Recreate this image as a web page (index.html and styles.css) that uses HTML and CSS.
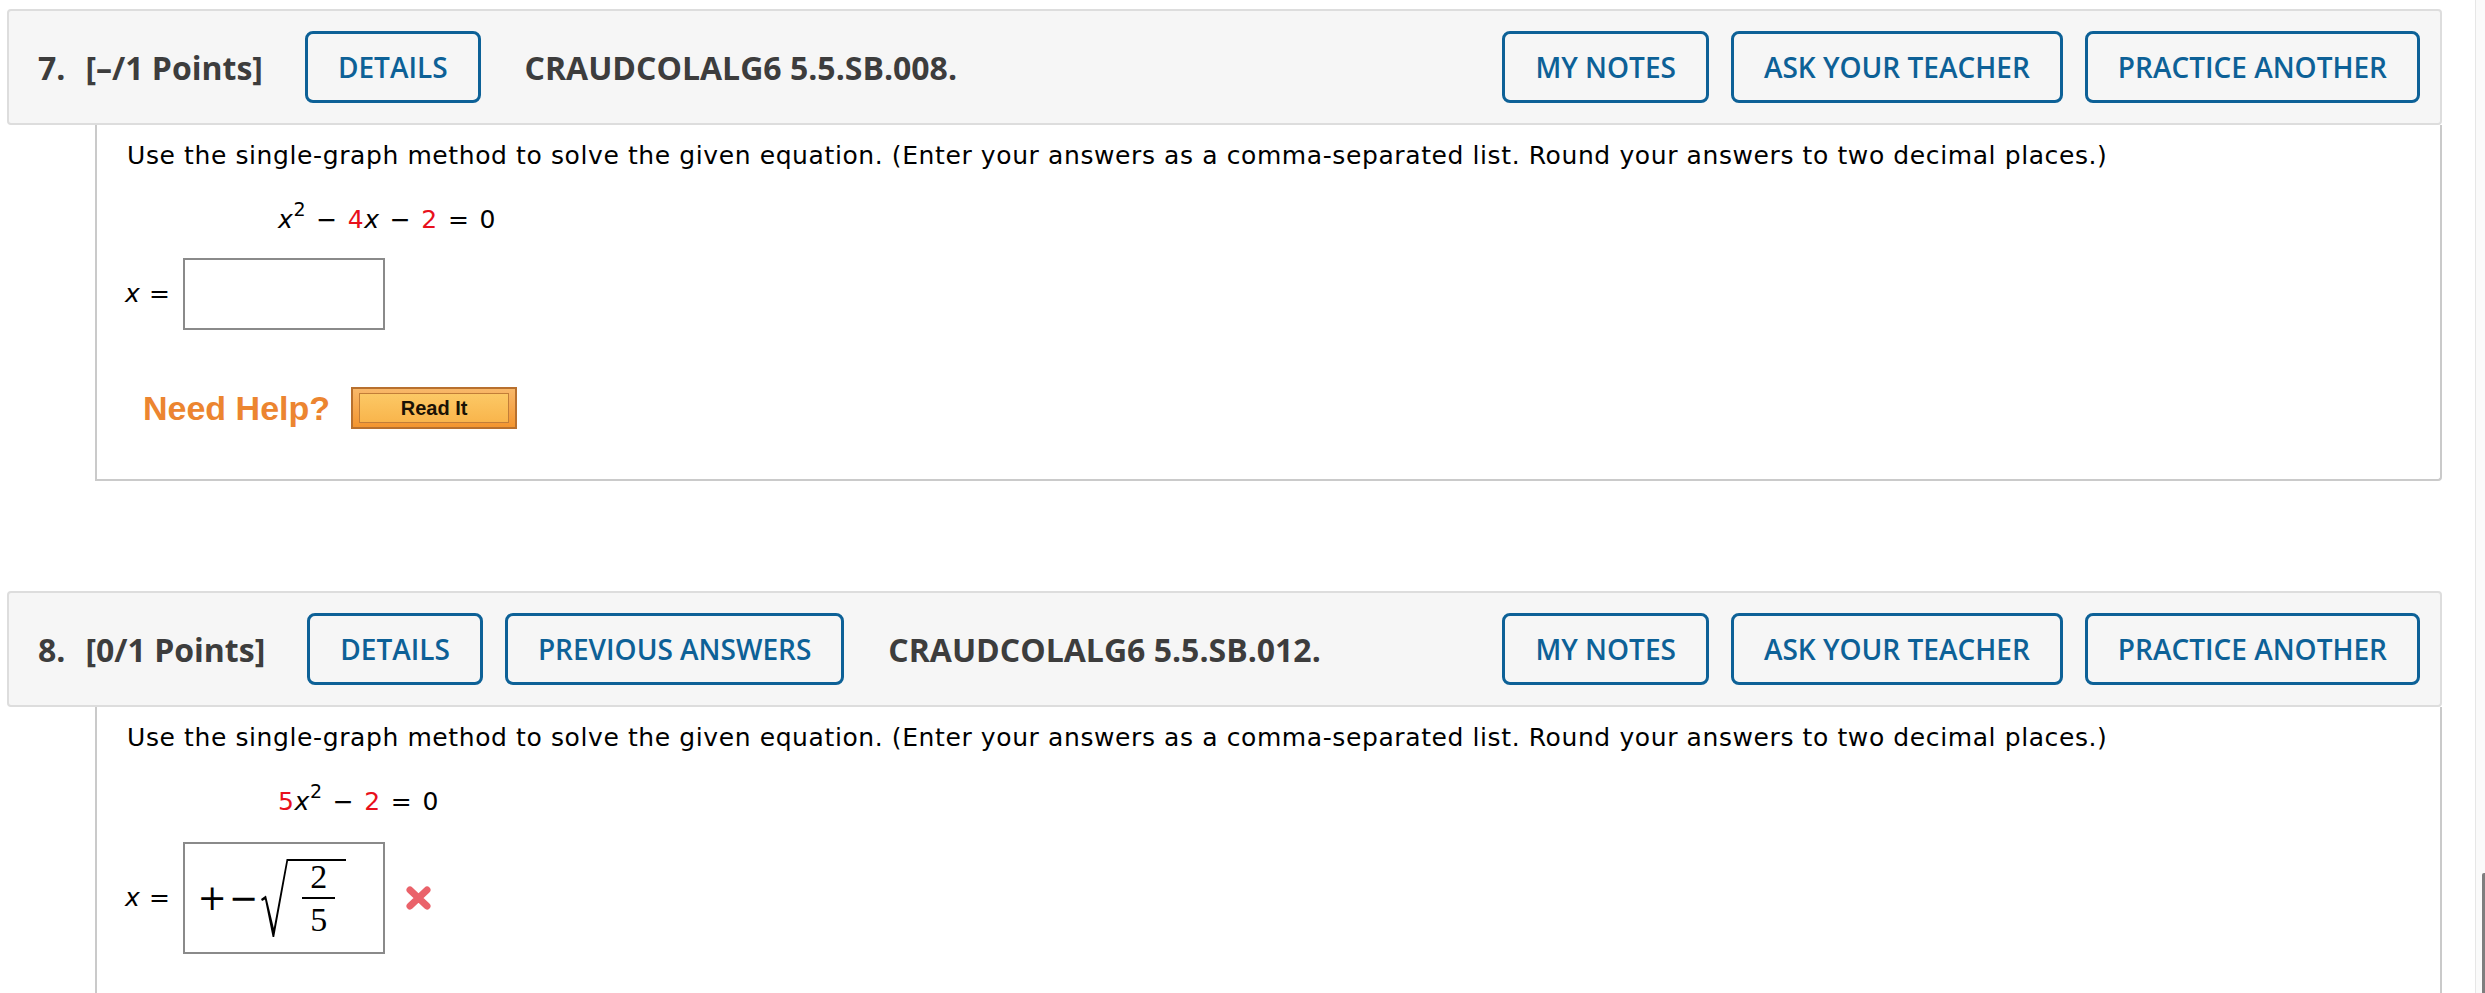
FILE: index.html
```html
<!DOCTYPE html>
<html lang="en">
<head>
<meta charset="utf-8">
<title>Questions</title>
<link rel="stylesheet" href="styles.css">
</head>
<body>
<div class="page">
  <main class="content">
    <section class="question q7">
      <header class="qhead">
        <span class="qnum">7.</span>
        <span class="pts">[–/1 Points]</span>
        <a class="btn">DETAILS</a>
        <span class="qtitle">CRAUDCOLALG6 5.5.SB.008.</span>
        <span class="spacer"></span>
        <a class="btn">MY NOTES</a>
        <a class="btn">ASK YOUR TEACHER</a>
        <a class="btn">PRACTICE ANOTHER</a>
      </header>
      <div class="qbody">
        <p class="prompt">Use the single-graph method to solve the given equation. (Enter your answers as a comma-separated list. Round your answers to two decimal places.)</p>
        <div class="eq"><i>x</i><sup>2</sup> − <span class="red">4</span><i>x</i> − <span class="red">2</span> = 0</div>
        <div class="answer">
          <span class="lbl"><i>x</i> =</span>
          <span class="input"></span>
        </div>
        <div class="help">
          <span class="needhelp">Need Help?</span>
          <span class="readit"><span class="readit-in">Read It</span></span>
        </div>
      </div>
    </section>

    <section class="question q8">
      <header class="qhead">
        <span class="qnum">8.</span>
        <span class="pts">[0/1 Points]</span>
        <a class="btn">DETAILS</a>
        <a class="btn">PREVIOUS ANSWERS</a>
        <span class="qtitle">CRAUDCOLALG6 5.5.SB.012.</span>
        <span class="spacer"></span>
        <a class="btn">MY NOTES</a>
        <a class="btn">ASK YOUR TEACHER</a>
        <a class="btn">PRACTICE ANOTHER</a>
      </header>
      <div class="qbody">
        <p class="prompt">Use the single-graph method to solve the given equation. (Enter your answers as a comma-separated list. Round your answers to two decimal places.)</p>
        <div class="eq"><span class="red">5</span><i>x</i><sup>2</sup> − <span class="red">2</span> = 0</div>
        <div class="answer">
          <span class="lbl"><i>x</i> =</span>
          <span class="input tall">
            <span class="math">
              <span class="op">+</span><span class="op">−</span>
              <span class="root">
                <svg class="radical" width="28" height="78" viewBox="0 0 28 78"><path d="M1 40 L6 36.5 L13.8 69 L26.6 0 L28 0 L28 2 L14.2 78 L12.6 78 L5 40.5 L2 42 Z" fill="#000"/></svg>
                <span class="radicand">
                  <span class="frac">
                    <span class="num">2</span>
                    <span class="bar"></span>
                    <span class="den">5</span>
                  </span>
                </span>
              </span>
            </span>
          </span>
          <svg class="wrong" width="27" height="26" viewBox="0 0 27 26"><path d="M5 5 L22 21 M22 5 L5 21" stroke="#ea626a" stroke-width="7" stroke-linecap="round"/></svg>
        </div>
      </div>
    </section>
  </main>
  <div class="scrollbar"><div class="thumb"></div></div>
</div>
</body>
</html>
```

FILE: styles.css
```css
* { box-sizing: border-box; }
html, body { margin: 0; padding: 0; }
body {
  background: #ffffff;
  width: 2485px;
  height: 993px;
  overflow: hidden;
  font-family: "Open Sans", "Liberation Sans", sans-serif;
}
.page { display: flex; height: 993px; }
.content { flex: 1; min-width: 0; padding: 9px 33px 0 7px; }

.scrollbar {
  width: 10px;
  border-left: 1px solid #e6e6e6;
  background: #fafafa;
  display: flex;
  flex-direction: column;
  justify-content: flex-end;
  align-items: flex-end;
}
.thumb { width: 3px; height: 120px; background: #7e7e7e; border-radius: 2px 0 0 0; }

.question + .question { margin-top: 110px; }

.qhead {
  height: 116px;
  display: flex;
  align-items: center;
  gap: 22px;
  padding: 0 20px 0 29px;
  background: #f6f6f6;
  border: 2px solid #dddddd;
  border-radius: 4px;
  color: #3d3d3d;
}
.qnum, .pts, .qtitle { font-weight: 700; font-size: 32px; white-space: nowrap; }
.qnum { margin-right: -2px; }
.pts { margin-right: 20px; }
.qtitle { margin-left: 22px; }
.spacer { flex: 1; }
.btn {
  height: 72px;
  display: flex;
  align-items: center;
  padding: 0 30px;
  border: 3px solid #0d6197;
  border-radius: 8px;
  color: #0d6197;
  font-size: 28px;
  font-weight: 600;
  white-space: nowrap;
  text-decoration: none;
}

.qbody {
  margin-left: 88px;
  border: 2px solid #cacaca;
  border-top: 0;
  border-radius: 0 0 4px 0;
  font-family: "DejaVu Sans", Verdana, sans-serif;
  font-size: 25px;
  letter-spacing: 0.6px;
  color: #000;
}
.q7 .qbody { height: 356px; }
.q8 .qbody { height: 420px; }

.prompt { margin: 0; padding: 16px 0 0 30px; line-height: 30px; white-space: nowrap; }
.eq { margin-top: 34px; padding-left: 181px; line-height: 30px; word-spacing: 1.5px; }
.eq sup { font-size: 19px; line-height: 0; vertical-align: 12px; }
.red { color: #e8101c; }

.answer { display: flex; align-items: center; padding-left: 28px; margin-top: 23px; }
.q8 .answer { margin-top: 25px; }
.lbl { margin-right: 12px; line-height: 30px; }
.input {
  width: 202px;
  height: 72px;
  border: 2px solid #8a8a8a;
  background: #fff;
  display: flex;
  align-items: center;
}
.input.tall { height: 112px; padding-left: 13px; }
.wrong { margin-left: 20px; }

.math { display: flex; align-items: center; font-family: "Liberation Serif", "Times New Roman", serif; letter-spacing: 0; }
.op { font-family: "DejaVu Serif", serif; font-size: 35px; line-height: 34px; }
.op + .op { margin-left: 2px; }
.root { display: flex; align-items: flex-start; margin-left: 2px; }
.radical { display: block; }
.radicand { border-top: 2px solid #000; padding: 0 11px 0 14px; }
.frac { display: flex; flex-direction: column; align-items: center; width: 33px; font-size: 34px; }
.num, .den { line-height: 32px; }
.bar { width: 33px; height: 2px; background: #000; margin: 4px 0 5px; }

.help { display: flex; align-items: center; margin-top: 57px; padding-left: 46px; letter-spacing: 0; }
.needhelp {
  font-family: "Liberation Sans", Arial, sans-serif;
  font-weight: 700;
  font-size: 34px;
  color: #ec8530;
  margin-right: 21px;
}
.readit {
  width: 166px;
  height: 42px;
  border: 2px solid #b8702e;
  background: linear-gradient(#f8b86a, #f3952f);
  padding: 4px 6px;
  display: flex;
}
.readit-in {
  flex: 1;
  border: 1px solid #c27d38;
  background: linear-gradient(#fcc865, #f9b54c);
  display: flex;
  align-items: center;
  justify-content: center;
  font-family: "Liberation Sans", Arial, sans-serif;
  font-weight: 700;
  font-size: 20px;
  color: #1a1205;
}
```
